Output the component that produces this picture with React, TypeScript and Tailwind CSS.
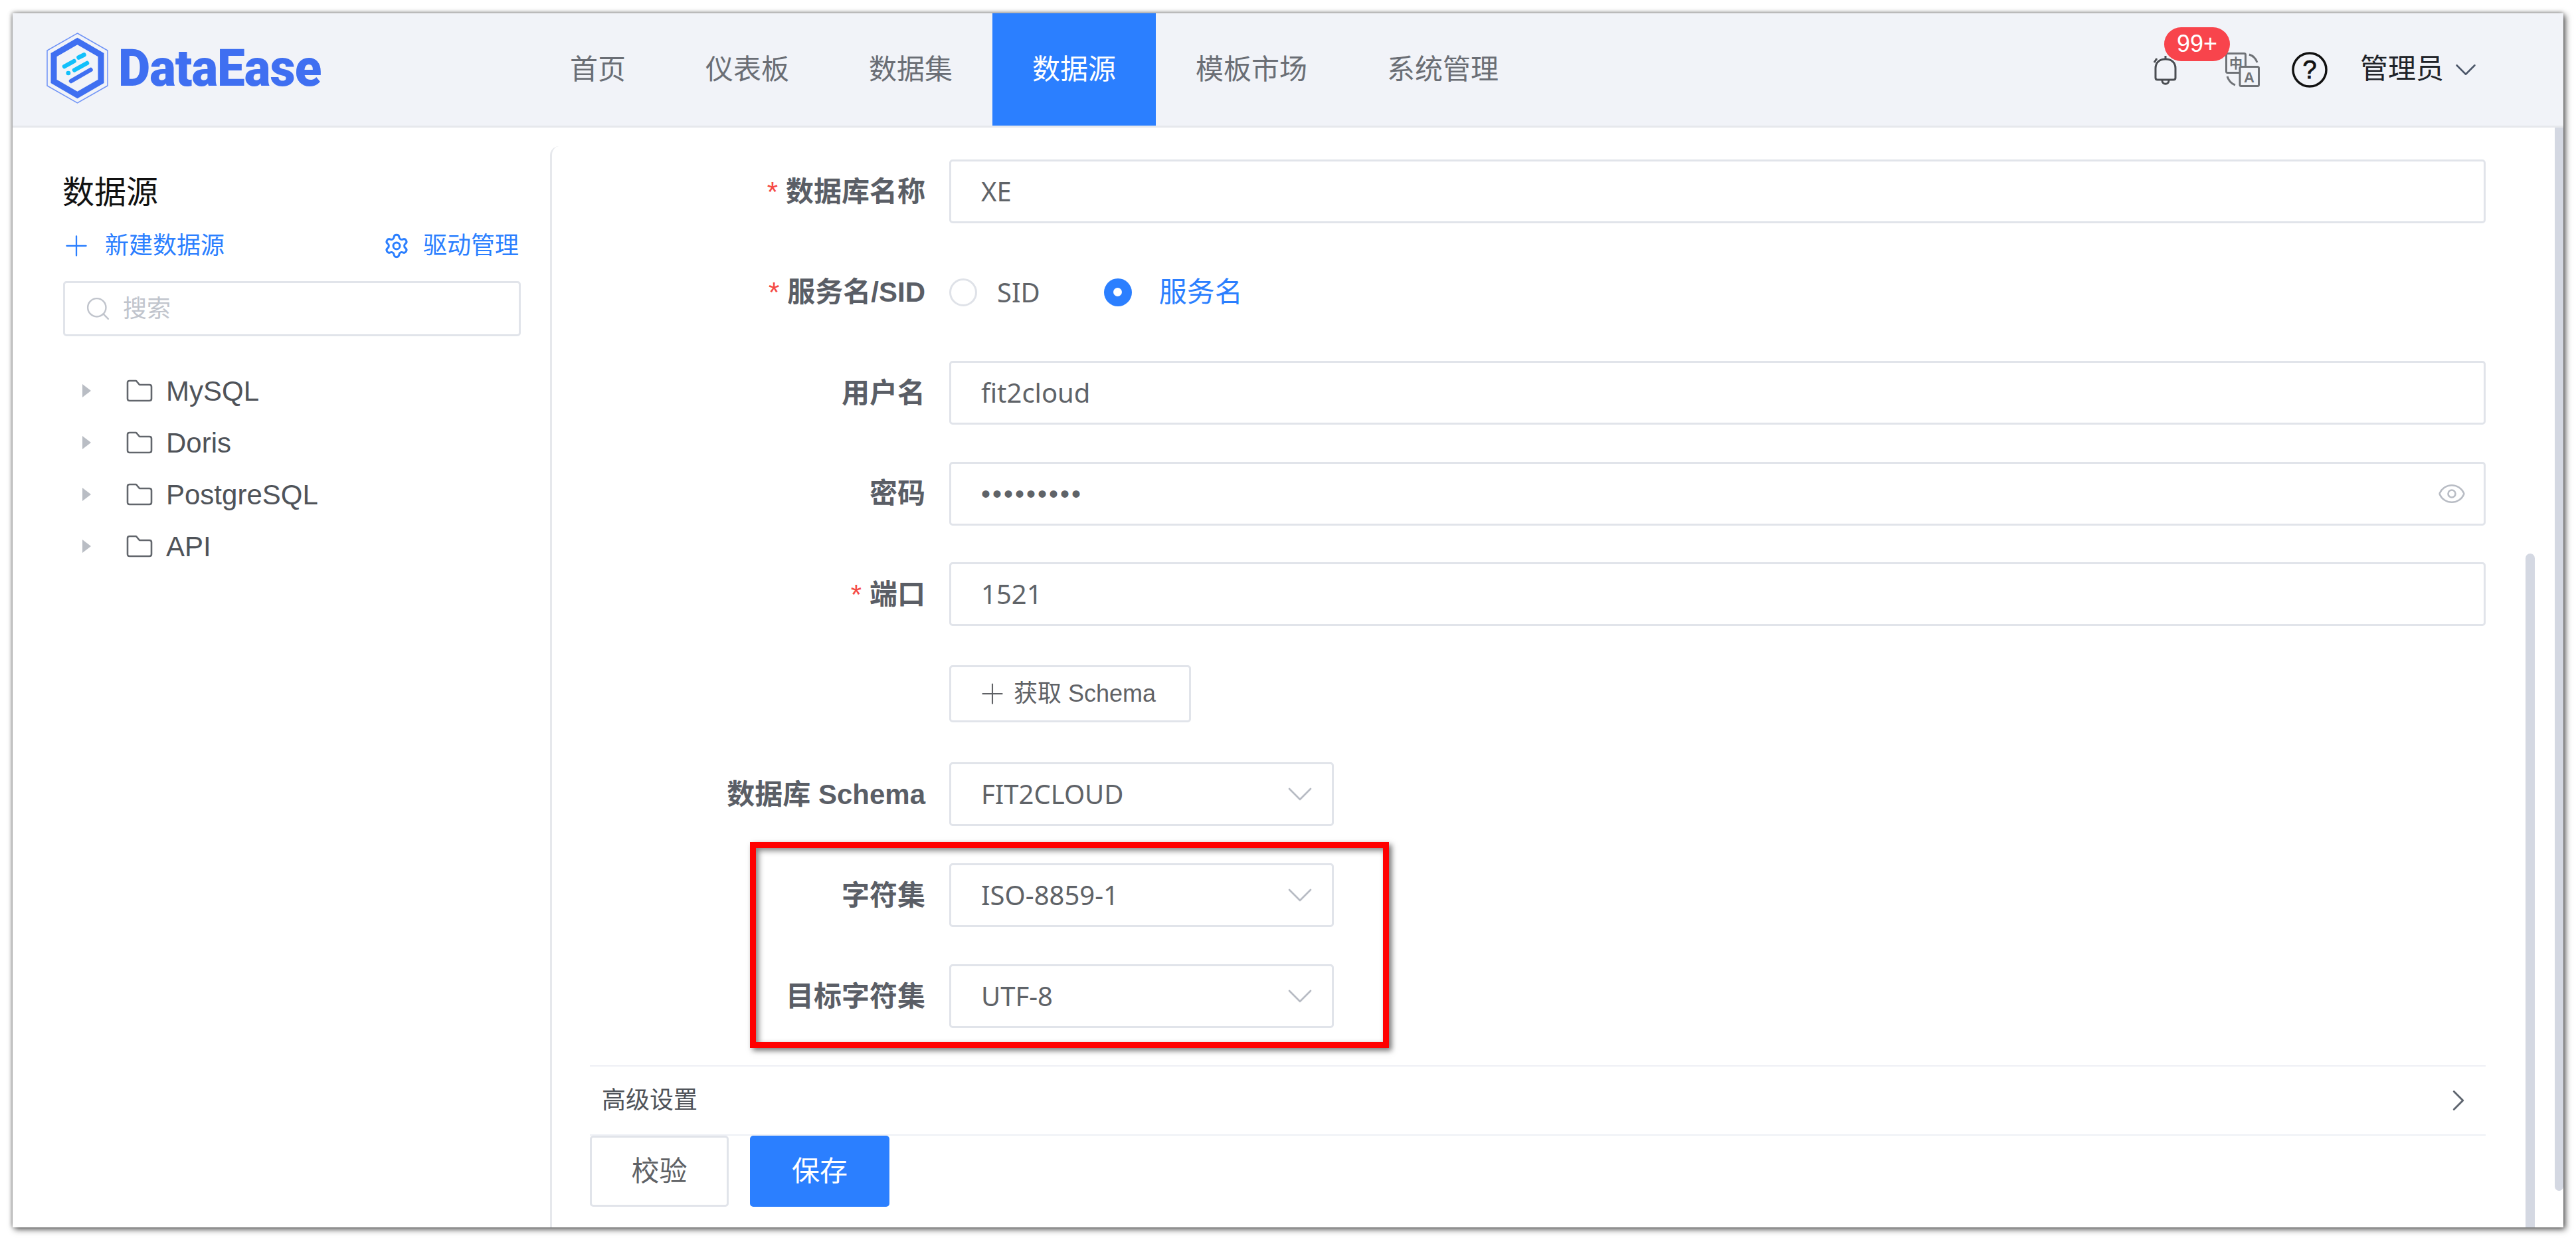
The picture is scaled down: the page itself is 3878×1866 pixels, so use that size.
import React from "react";
import { Eye, Search, Plus, ChevronDown, ChevronRight, Settings } from "lucide-react";

const nav = ["首页", "仪表板", "数据集", "数据源", "模板市场", "系统管理"];
const tree = ["MySQL", "Doris", "PostgreSQL", "API"];

function Logo() {
  return (
    <svg width="93" height="107" viewBox="0 0 93 107" fill="none">
      <polygon points="46.5,1 92,27 92,80 46.5,106 1,80 1,27" stroke="#6f93f6" strokeWidth="1.5" />
      <polygon points="46.5,13 82,33.5 82,73.5 46.5,94 11,73.5 11,33.5" stroke="#3f6ff1" strokeWidth="9" />
      <g strokeWidth="6.5" strokeLinecap="round">
        <line x1="27" y1="51" x2="41.5" y2="43" stroke="#12c0fb" />
        <line x1="48.5" y1="37.5" x2="56.5" y2="33.5" stroke="#12c0fb" />
        <line x1="32.7" y1="61" x2="33" y2="61" stroke="#12c0fb" />
        <line x1="42" y1="56.5" x2="61" y2="46" stroke="#12c0fb" />
        <line x1="37" y1="73" x2="66.5" y2="56" stroke="#3f6ff1" />
      </g>
    </svg>
  );
}

function Bell() {
  return (
    <svg width="38" height="45" viewBox="0 0 38 45" fill="none" stroke="#4a4d52" strokeWidth="3">
      <path d="M4 34 V20 C4 11 10 6 19 6 C28 6 34 11 34 20 V34 C34 36 33 37 31 37 H7 C5 37 4 36 4 34 Z" />
      <path d="M19 1 V6" />
      <path d="M14 38 C14 45 24 45 24 38" />
      <path d="M2 11 L6 5" />
    </svg>
  );
}

function Translate() {
  return (
    <svg width="52" height="52" viewBox="0 0 52 52" fill="none" stroke="#6f7277" strokeWidth="3">
      <rect x="1.5" y="1.5" width="29" height="29" rx="2" />
      <rect x="22" y="21.5" width="28.5" height="29" rx="2" fill="#f1f3f8" />
      <text x="16" y="24" textAnchor="middle" fontSize="20" fill="#6f7277" stroke="none" fontWeight="700" fontFamily="'Noto Sans CJK SC',sans-serif">中</text>
      <text x="36" y="45" textAnchor="middle" fontSize="22" fill="#6f7277" stroke="none" fontWeight="700" fontFamily="'Liberation Sans',sans-serif">A</text>
      <path d="M36 3 C42 5 46 9 48 15" />
      <path d="M3 36 C5 42 9 47 15 49" />
    </svg>
  );
}

function Help() {
  return (
    <svg width="54" height="54" viewBox="0 0 54 54" fill="none">
      <circle cx="27" cy="27" r="25" stroke="#111" strokeWidth="3.5" />
      <text x="27" y="40" textAnchor="middle" fontSize="38" fontWeight="400" fill="#111" stroke="#111" strokeWidth="0.8" fontFamily="'Liberation Sans',sans-serif">?</text>
    </svg>
  );
}

function Folder() {
  return (
    <svg width="40" height="34" viewBox="0 0 40 34" fill="none" stroke="#62666c" strokeWidth="2.6" strokeLinejoin="round">
      <path d="M2 5 C2 3 3 2 5 2 H15 L20 8 H35 C37 8 38 9 38 11 V29 C38 31 37 32 35 32 H5 C3 32 2 31 2 29 Z" />
    </svg>
  );
}

function Field({ label, required, children }: { label: string; required?: boolean; children: React.ReactNode }) {
  return (
    <div className="flex h-[96px] items-center">
      <div className="flex w-[541px] shrink-0 items-center justify-end pr-[36px] text-[42px] font-bold text-[#5a5e66]">
        {required && <span className="mr-[12px] font-normal text-[#f54a45]">*</span>}
        <span>{label}</span>
      </div>
      {children}
    </div>
  );
}

function TextBox({ children, right }: { children: React.ReactNode; right?: React.ReactNode }) {
  return (
    <div className="flex h-[96px] flex-1 items-center justify-between rounded-[5px] border-[3px] border-[#e1e4ea] bg-white pl-[45px] pr-[26px] text-[40px] text-[#5f6368] [font-family:'Noto_Sans','Noto_Sans_CJK_SC',sans-serif]">
      <span>{children}</span>
      {right}
    </div>
  );
}

function SelectBox({ value }: { value: string }) {
  return (
    <div className="flex h-[96px] w-[579px] items-center justify-between rounded-[5px] border-[3px] border-[#e1e4ea] bg-white pl-[45px] pr-[16px] text-[40px] text-[#5f6368] [font-family:'Noto_Sans','Noto_Sans_CJK_SC',sans-serif]">
      <span>{value}</span>
      <ChevronDown className="h-[64px] w-[64px] text-[#b8bcc4]" strokeWidth={1} />
    </div>
  );
}

export default function App() {
  return (
    <div className="h-[1866px] w-[3878px] overflow-hidden bg-white pb-[19px] pl-[19px] pr-[19px] pt-[20px] [font-family:'Liberation_Sans','Noto_Sans_CJK_SC',sans-serif]">
      <div className="relative flex h-full flex-col bg-white shadow-[3px_3px_9px_rgba(0,0,0,0.65),-1px_-1px_6px_rgba(0,0,0,0.35)]">
        {/* header */}
        <header className="flex h-[172px] shrink-0 items-stretch border-b-[3px] border-[#e6e8ec] bg-[#f1f3f8]">
          <div className="flex w-[779px] shrink-0 items-center gap-[15px] pb-[32px] pl-[51px] pt-[28px]">
            <Logo />
            <span className="origin-left scale-x-[0.955] text-[78px] font-black leading-none tracking-[-1px] text-[#3f6ff1] [font-family:Roboto,sans-serif]">
              DataEase
            </span>
          </div>
          <nav className="flex items-stretch">
            {nav.map((n) => (
              <div
                key={n}
                className={
                  n === "数据源"
                    ? "flex items-center bg-[#2b7fff] px-[60px] text-[42px] text-white"
                    : "flex items-center px-[60px] text-[42px] text-[#6a6e75]"
                }
              >
                {n}
              </div>
            ))}
          </nav>
          <div className="ml-auto flex items-center pb-[2px] pr-[120px] pt-[3px]">
            <div className="relative">
              <Bell />
              <span className="absolute bottom-[36px] left-[17px] flex h-[51px] w-[99px] items-center justify-center rounded-full bg-[#f8444c] text-[36px] text-white">
                99+
              </span>
            </div>
            <div className="ml-[71px]">
              <Translate />
            </div>
            <div className="ml-[48px]">
              <Help />
            </div>
            <span className="mb-[4px] ml-[49px] text-[42px] text-[#1f2329]">管理员</span>
            <ChevronDown className="ml-[6px] h-[54px] w-[54px] text-[#4a5568]" strokeWidth={1.1} />
          </div>
        </header>

        {/* body */}
        <div className="flex min-h-0 flex-1 pr-[43px] pt-[28px]">
          <aside className="w-[809px] shrink-0 pl-[76px] pt-[42px]">
            <div className="-ml-[1px] text-[48px] leading-[56px] text-[#111]">数据源</div>
            <div className="mt-[32px] flex h-[40px] w-[689px] items-center justify-between text-[36px] text-[#2b7fff]">
              <div className="flex items-center">
                <Plus className="-ml-[5px] h-[50px] w-[50px]" strokeWidth={1.1} />
                <span className="ml-[18px]">新建数据源</span>
              </div>
              <div className="flex items-center pr-[3px]">
                <Settings className="-mr-[1px] h-[40px] w-[40px]" strokeWidth={1.8} />
                <span className="ml-[21px]">驱动管理</span>
              </div>
            </div>
            <div className="mt-[33px] flex h-[83px] w-[689px] items-center rounded-[5px] border-[3px] border-[#e1e4ea] pl-[29px] text-[36px] text-[#c0c4cc]">
              <Search className="h-[41px] w-[41px]" strokeWidth={1.4} />
              <span className="ml-[17px]">搜索</span>
            </div>
            <div className="mt-[43px]">
              {tree.map((t) => (
                <div key={t} className="flex h-[78px] items-center text-[42px] text-[#4f5359]">
                  <span className="ml-[29px] h-0 w-0 border-y-[10px] border-l-[13px] border-y-transparent border-l-[#b9bdc4]" />
                  <span className="ml-[53px]">
                    <Folder />
                  </span>
                  <span className="ml-[20px]">{t}</span>
                </div>
              ))}
            </div>
          </aside>

          <main className="relative flex min-w-0 flex-1 flex-col rounded-t-[14px] border-l-[3px] border-[#e6e8ec] pl-[57px] pr-[74px] pt-[20px]">
            <div className="flex flex-col gap-[55.6px]">
              <Field label="数据库名称" required>
                <TextBox>XE</TextBox>
              </Field>
              <Field label="服务名/SID" required>
                <div className="flex items-center text-[42px]">
                  <span className="h-[42px] w-[42px] rounded-full border-[3px] border-[#dfe2e8] bg-white" />
                  <span className="ml-[30px] text-[40px] text-[#5f6368] [font-family:'Noto_Sans',sans-serif]">SID</span>
                  <span className="ml-[96px] flex h-[42px] w-[42px] items-center justify-center rounded-full bg-[#2b7fff]">
                    <span className="h-[13px] w-[13px] rounded-full bg-white" />
                  </span>
                  <span className="ml-[41px] text-[#2b7fff]">服务名</span>
                </div>
              </Field>
              <Field label="用户名">
                <TextBox>fit2cloud</TextBox>
              </Field>
              <Field label="密码">
                <TextBox right={<Eye className="h-[44px] w-[44px] text-[#b8bcc4]" strokeWidth={1.4} />}>
                  <span className="tracking-[3px] [font-family:'Liberation_Sans',sans-serif]">•••••••••</span>
                </TextBox>
              </Field>
              <Field label="端口" required>
                <TextBox>1521</TextBox>
              </Field>
            </div>
            <div className="ml-[541px] mt-[59px] flex h-[86px] w-[364px] items-center rounded-[5px] border-[3px] border-[#e1e4ea] pl-[37px] text-[36px] text-[#606266]">
              <Plus className="h-[50px] w-[50px]" strokeWidth={1} />
              <span className="ml-[7px]">获取 Schema</span>
            </div>
            <div className="mt-[60px] flex flex-col gap-[56px]">
              <Field label="数据库 Schema">
                <SelectBox value="FIT2CLOUD" />
              </Field>
              <Field label="字符集">
                <SelectBox value="ISO-8859-1" />
              </Field>
              <Field label="目标字符集">
                <SelectBox value="UTF-8" />
              </Field>
            </div>
            <div className="mt-[56px] flex h-[106px] items-center justify-between border-y-[2px] border-[#eef0f5] pl-[18px] pr-[14px] text-[36px] text-[#4f5359]">
              <span>高级设置</span>
              <ChevronRight className="h-[54px] w-[54px] text-[#5f6670]" strokeWidth={1.3} />
            </div>
            <div className="flex gap-[32px]">
              <div className="flex h-[107px] w-[209px] items-center justify-center rounded-[5px] border-[3px] border-[#e1e4ea] text-[42px] text-[#606266]">
                校验
              </div>
              <div className="flex h-[107px] w-[210px] items-center justify-center rounded-[5px] bg-[#2b7fff] text-[42px] text-white">
                保存
              </div>
            </div>
            <span className="absolute bottom-0 right-0 top-[613px] w-[14px] rounded-t-full bg-[#d4d8e2]" />
            <span className="pointer-events-none absolute left-[298px] top-[1047px] h-[310px] w-[962px] border-[9px] border-[#ff0000] shadow-[4px_4px_8px_rgba(0,0,0,0.55),inset_4px_4px_8px_rgba(0,0,0,0.5)]" />
          </main>
        </div>

        <span className="absolute bottom-[55px] right-0 top-[172px] w-[13px] rounded-b-full bg-[#d4d8e2]" />
      </div>
    </div>
  );
}
